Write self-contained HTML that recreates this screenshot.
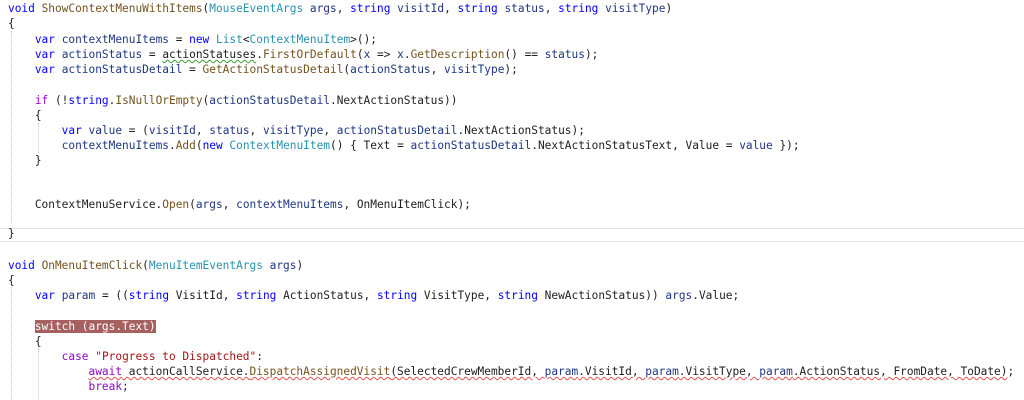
<!DOCTYPE html>
<html><head><meta charset="utf-8"><style>
body{margin:0;width:1024px;height:400px;background:#fff;overflow:hidden;position:relative;font-family:"DejaVu Sans Mono","Liberation Mono",monospace;font-size:11.15px;color:#1e1e1e}
.l{position:absolute;left:8px;white-space:pre;line-height:15px;height:15px}
.k{color:#0000ff}.t{color:#2b91af}.m{color:#74531f}.s{color:#a31515}.c{color:#8f08c4}.p{color:#1f377f}
.sq{text-decoration:underline wavy #e05050;text-decoration-thickness:1px;text-underline-offset:1px}
.sg{text-decoration:underline wavy #3c9c3c;text-decoration-thickness:1px;text-underline-offset:1px}
.hl{background:#a66060;color:#fff}
.hr{position:absolute;left:0;width:1024px;height:1px;background:#e3e3ea}
.g{position:absolute;width:0;border-left:1px dotted #c8c8c8}
</style></head><body>
<div class="hr" style="top:228px"></div><div class="hr" style="top:241px"></div>
<div class="g" style="left:11px;top:31px;height:192px"></div>
<div class="g" style="left:11px;top:287px;height:113px"></div>
<div class="g" style="left:38px;top:123px;height:30px"></div>
<div class="g" style="left:38px;top:348px;height:52px"></div>
<div class="l" style="top:1px"><span class="k">void</span> <span class="m">ShowContextMenuWithItems</span>(<span class="t">MouseEventArgs</span> <span class="p">args</span>, <span class="k">string</span> <span class="p">visitId</span>, <span class="k">string</span> <span class="p">status</span>, <span class="k">string</span> <span class="p">visitType</span>)</div>
<div class="l" style="top:16px">{</div>
<div class="l" style="top:32px">    <span class="k">var</span> <span class="p">contextMenuItems</span> = <span class="k">new</span> <span class="t">List</span>&lt;<span class="t">ContextMenuItem</span>&gt;();</div>
<div class="l" style="top:47px">    <span class="k">var</span> <span class="p">actionStatus</span> = <span class="sg">actionStatuses</span>.<span class="m">FirstOrDefault</span>(<span class="p">x</span> =&gt; <span class="p">x</span>.<span class="m">GetDescription</span>() == <span class="p">status</span>);</div>
<div class="l" style="top:62px">    <span class="k">var</span> <span class="p">actionStatusDetail</span> = <span class="m">GetActionStatusDetail</span>(<span class="p">actionStatus</span>, <span class="p">visitType</span>);</div>
<div class="l" style="top:93px">    <span class="c">if</span> (!<span class="k">string</span>.<span class="m">IsNullOrEmpty</span>(<span class="p">actionStatusDetail</span>.NextActionStatus))</div>
<div class="l" style="top:108px">    {</div>
<div class="l" style="top:123px">        <span class="k">var</span> <span class="p">value</span> = (<span class="p">visitId</span>, <span class="p">status</span>, <span class="p">visitType</span>, <span class="p">actionStatusDetail</span>.NextActionStatus);</div>
<div class="l" style="top:138px">        <span class="p">contextMenuItems</span>.<span class="m">Add</span>(<span class="k">new</span> <span class="t">ContextMenuItem</span>() { Text = <span class="p">actionStatusDetail</span>.NextActionStatusText, Value = <span class="p">value</span> });</div>
<div class="l" style="top:153px">    }</div>
<div class="l" style="top:197px">    ContextMenuService.<span class="m">Open</span>(<span class="p">args</span>, <span class="p">contextMenuItems</span>, OnMenuItemClick);</div>
<div class="l" style="top:226px">}</div>
<div class="l" style="top:258px"><span class="k">void</span> <span class="m">OnMenuItemClick</span>(<span class="t">MenuItemEventArgs</span> <span class="p">args</span>)</div>
<div class="l" style="top:273px">{</div>
<div class="l" style="top:288px">    <span class="k">var</span> <span class="p">param</span> = ((<span class="k">string</span> VisitId, <span class="k">string</span> ActionStatus, <span class="k">string</span> VisitType, <span class="k">string</span> NewActionStatus)) <span class="p">args</span>.Value;</div>
<div class="l" style="top:319px">    <span class="hl">switch (args.Text)</span></div>
<div class="l" style="top:334px">    {</div>
<div class="l" style="top:349px">        <span class="c">case</span> <span class="s">"Progress to Dispatched"</span>:</div>
<div class="l" style="top:364px">            <span class="sq"><span class="c">await</span> actionCallService.<span class="m">DispatchAssignedVisit</span>(SelectedCrewMemberId, <span class="p">param</span>.VisitId, <span class="p">param</span>.VisitType, <span class="p">param</span>.ActionStatus, FromDate, ToDate)</span>;</div>
<div class="l" style="top:379px">            <span class="c">break</span>;</div>
</body></html>
